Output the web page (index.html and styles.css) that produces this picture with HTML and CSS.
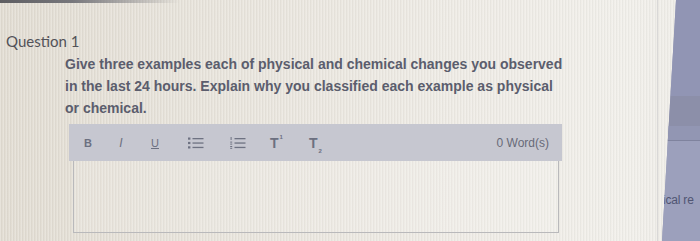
FILE: index.html
```html
<!DOCTYPE html>
<html>
<head>
<meta charset="utf-8">
<link rel="stylesheet" href="styles.css">
</head>
<body>
<div class="screen">
  <div class="topbar"></div>
  <main class="main">
    <h2 class="qtitle">Question 1</h2>
    <p class="prompt">Give three examples each of physical and chemical changes you observed in the last 24 hours. Explain why you classified each example as physical or chemical.</p>
    <div class="editor">
      <div class="toolbar">
        <span class="tb b">B</span>
        <span class="tb i">I</span>
        <span class="tb u">U</span>
        <span class="tb ico ul">
          <svg width="16" height="12" viewBox="0 0 16 12"><g fill="#6e7282"><rect x="0" y="0.5" width="2.4" height="2.2"/><rect x="0" y="4.9" width="2.4" height="2.2"/><rect x="0" y="9.3" width="2.4" height="2.2"/><rect x="4.5" y="1" width="11" height="1.3"/><rect x="4.5" y="5.4" width="11" height="1.3"/><rect x="4.5" y="9.8" width="11" height="1.3"/></g></svg>
        </span>
        <span class="tb ico ol">
          <svg width="16" height="12" viewBox="0 0 16 12"><g fill="#6e7282"><rect x="0.6" y="0" width="1" height="3"/><rect x="0.2" y="4.6" width="2" height="1"/><rect x="0.2" y="6.6" width="2" height="1"/><rect x="0.2" y="9" width="2" height="1"/><rect x="0.2" y="10.8" width="2" height="1"/><rect x="4.5" y="1" width="11" height="1.3"/><rect x="4.5" y="5.4" width="11" height="1.3"/><rect x="4.5" y="9.8" width="11" height="1.3"/></g></svg>
        </span>
        <span class="tb sup">T<small>1</small></span>
        <span class="tb sub">T<small>2</small></span>
        <span class="count">0 Word(s)</span>
      </div>
      <div class="area"></div>
    </div>
  </main>
  <div class="gap"></div>
  <aside class="side">
    <div class="side-top"></div>
    <div class="side-band"></div>
    <div class="side-rest"><span class="side-text">ical re</span></div>
  </aside>
</div>
</body>
</html>
```
FILE: styles.css
```css
html, body {
  margin: 0;
  padding: 0;
}
body {
  width: 700px;
  height: 241px;
  overflow: hidden;
  font-family: "Liberation Sans", Arial, sans-serif;
}
.screen {
  position: relative;
  width: 700px;
  height: 241px;
  display: flex;
  background:
    repeating-linear-gradient(90deg, rgba(255,255,255,0.18) 0 1px, rgba(0,0,0,0.03) 1px 2px, rgba(255,255,255,0) 2px 3px),
    linear-gradient(90deg, #e2ddd3 0%, #e8e4dc 30%, #eeebe5 65%, #f1efea 90%, #eeece7 100%);
}
.topbar {
  position: absolute;
  left: 0;
  top: 0;
  width: 180px;
  height: 3px;
  background: linear-gradient(90deg, #5e5e62 0%, #77777c 40%, rgba(160,160,165,0) 100%);
}
.main {
  flex: 1;
  padding: 32px 0 0 6px;
  box-sizing: border-box;
}
.qtitle {
  margin: 0;
  font-family: Lato, "Open Sans", sans-serif;
  font-weight: 400;
  font-size: 15px;
  line-height: 18px;
  color: #525258;
}
.prompt {
  margin: 3px 0 0 59px;
  width: 503px;
  font-size: 14px;
  line-height: 22px;
  font-weight: 700;
  color: #5b5d6d;
}
.editor {
  margin: 5px 0 0 63px;
  width: 493px;
}
.toolbar {
  height: 37px;
  background: #c6c7d0;
  display: flex;
  align-items: center;
  padding: 0 13px 0 14px;
  box-sizing: border-box;
  color: #6c7080;
}
.tb {
  display: flex;
  align-items: center;
  justify-content: center;
  font-weight: 700;
  font-size: 11px;
}
.b { width: 10px; }
.i { width: 6px; margin-left: 25px; font-style: italic; font-weight: 400; font-size: 12px; }
.u { width: 10px; margin-left: 26px; text-decoration: underline; font-weight: 400; font-size: 11px; }
.ul { margin-left: 28px; }
.ol { margin-left: 26px; }
.sup { margin-left: 24px; font-size: 14px; align-items: flex-start; }
.sup small { font-size: 6px; margin-top: -1px; margin-left: 1px; }
.sub { margin-left: 26px; font-size: 14px; align-items: flex-end; }
.sub small { font-size: 6px; margin-bottom: -3px; margin-left: 1px; }
.count {
  margin-left: auto;
  font-size: 12px;
  color: #686a78;
}
.area {
  margin: 0 3px 0 4px;
  height: 72px;
  box-sizing: border-box;
  border: 1px solid #b9b9bb;
  border-top: none;
  background: rgba(255,255,255,0.12);
}
.gap {
  flex: 0 0 4px;
  border-left: 1px solid rgba(200,200,200,0.6);
}
.side {
  flex: 0 0 38px;
  display: flex;
  flex-direction: column;
  clip-path: polygon(14px 0, 100% 0, 100% 100%, 0 100%);
  background: #9498b5;
}
.side-top {
  height: 96px;
  background: #9195b4;
}
.side-band {
  height: 30px;
  background: #8c8fa9;
  border-bottom: 14px solid #9296b3;
}
.side-rest {
  flex: 1;
  background: #9ca0bc;
  border-top: 1px solid #7f839e;
  position: relative;
}
.side-text {
  position: absolute;
  left: 1px;
  top: 52px;
  font-size: 12px;
  letter-spacing: -0.2px;
  color: #505572;
  white-space: nowrap;
}
```
